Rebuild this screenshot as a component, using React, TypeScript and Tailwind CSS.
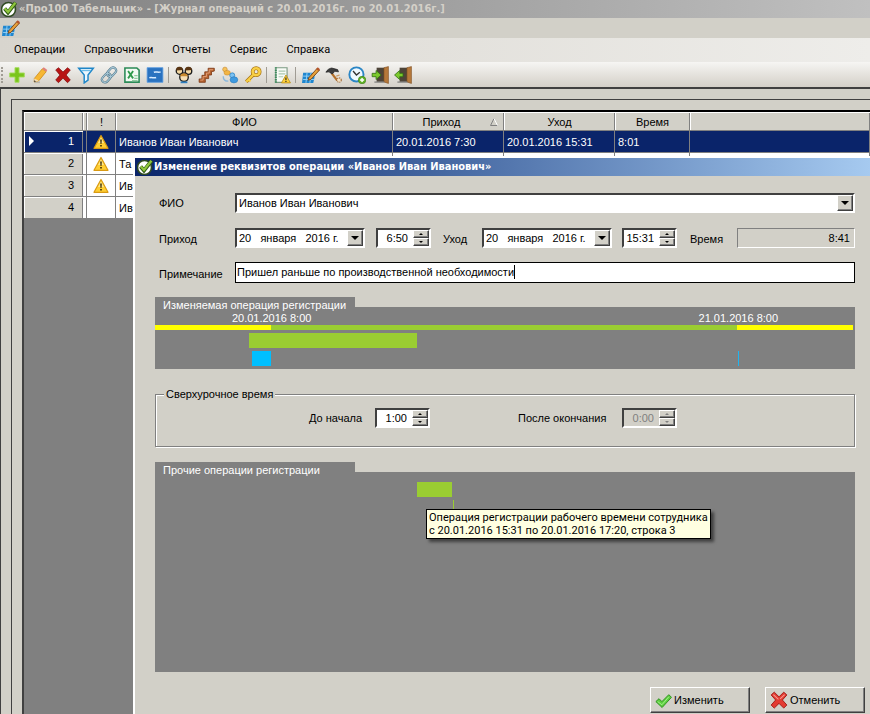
import { useState } from "react";
import type { ReactNode } from "react";

/* ---------- small pixel icons ---------- */

function Svg({ children, size = 18 }: { children: ReactNode; size?: number }) {
  return (
    <svg width={size} height={size} viewBox="0 0 16 16" fill="none" aria-hidden="true" className="shrink-0">
      {children}
    </svg>
  );
}

const AppIcon = () => (
  <Svg size={16}>
    <circle cx="7.5" cy="8.5" r="7" fill="#fff" stroke="#2f4a22" strokeWidth="1.6" />
    <path d="M3.6 7.4 7 11.4 14.6 1.6" stroke="#2f5a12" strokeWidth="3.8" />
    <path d="M3.8 7.6 7 11 14.4 1.8" stroke="#8fc63d" strokeWidth="2.2" />
  </Svg>
);

const TablePencil = () => (
  <Svg>
    <path d="M1 6h11l-2 9H0z" fill="#1f86cf" />
    <path d="M1 9h11M1 12h10M4.5 6 3.500 15M8 6 7 15" stroke="#9ad4f5" strokeWidth=".8" />
    <path d="M6 10.500 13.500 2l2 1.700L8 11.800l-2.600.8z" fill="#e7a13b" stroke="#7b4415" strokeWidth=".8" />
    <path d="M12.600 2.600 14 1l2 1.800-1.400 1.600z" fill="#b5542b" />
  </Svg>
);

const Plus = () => (
  <Svg>
    <path d="M6.200 1.500h3.600v4.700h4.700v3.600H9.800v4.700H6.200V9.800H1.500V6.200h4.700z" fill="#7ac51c" stroke="#a5dd5a" strokeWidth=".8" />
  </Svg>
);

const Pencil = () => (
  <Svg>
    <path d="M3 14.500h5" stroke="#b9b5ae" strokeWidth="1.500" />
    <path d="M3 11 10 2.500 13.500 5 7 13l-4.200 1.200z" fill="#f7b733" stroke="#c98a1b" strokeWidth=".7" />
    <path d="M10 2.500 11.300 1.200 14.500 3.600 13.500 5z" fill="#e0807a" />
    <path d="M2.800 14.200 3 11l4 2z" fill="#f4dcb4" />
    <path d="M2.700 14.300 2.900 12.700 4.500 13.700z" fill="#333" />
  </Svg>
);

const Cross = () => (
  <Svg>
    <path d="M1.500 3.500 4 1.500 8 5.300 12 1.500 14.500 3.500 10.800 8 14.500 12.500 12 14.800 8 10.800 4 14.800 1.500 12.500 5.200 8z" fill="#b81414" stroke="#7d0b0b" strokeWidth=".6" />
  </Svg>
);

const Funnel = () => (
  <Svg>
    <path d="M1.500 2h13L9.800 8v4.500L6.400 15V8z" fill="#eaf6fd" stroke="#1f86c8" strokeWidth="1.300" />
    <path d="M3.500 4h9" stroke="#6bbbe8" strokeWidth="1.200" />
  </Svg>
);

const Link = () => (
  <Svg>
    <g transform="rotate(-48 8 8)">
      <rect x="0" y="5.300" width="9" height="5.400" rx="2.700" stroke="#4b7388" strokeWidth="1.900" />
      <rect x="7" y="5.300" width="9" height="5.400" rx="2.700" stroke="#4b7388" strokeWidth="1.900" />
      <rect x="0" y="5.300" width="9" height="5.400" rx="2.700" stroke="#a9c8d6" strokeWidth=".9" />
      <rect x="7" y="5.300" width="9" height="5.400" rx="2.700" stroke="#a9c8d6" strokeWidth=".9" />
    </g>
  </Svg>
);

const Sheet = () => (
  <Svg>
    <path d="M1.700 1.700h10.600l2 2v10.600H1.700z" fill="#f2faf3" stroke="#2b8a57" strokeWidth="1.400" />
    <path d="M4.500 4.500 9 11M9 4.500 4.500 11" stroke="#2f9a4c" strokeWidth="1.600" />
    <path d="M10 8.500h3M10 11h3M8 13h5" stroke="#8fca9f" />
  </Svg>
);

const DocBlue = () => (
  <Svg>
    <path d="M1 1.500h14v13H1z" fill="#2a72c0" stroke="#5a9be0" strokeWidth=".7" />
    <path d="M7 5.500c2-.8 4 .6 6-.3M3 10.500c2-.8 4 .6 6-.3" stroke="#d9ecff" strokeWidth="1.400" />
  </Svg>
);

const People = () => (
  <Svg>
    <circle cx="4" cy="4.500" r="2.900" fill="#f4d9a5" stroke="#1d1d1d" strokeWidth="1.200" />
    <circle cx="12" cy="4.500" r="2.900" fill="#f4d9a5" stroke="#1d1d1d" strokeWidth="1.200" />
    <path d="M1 4a3 3 0 0 1 6-.5ZM9 4a3 3 0 0 1 6-.5Z" fill="#5a3512" />
    <circle cx="8" cy="10" r="3.800" fill="#f7dfb3" stroke="#1d1d1d" strokeWidth="1.200" />
    <path d="M4.500 9a3.600 3.200 0 0 1 7 0Z" fill="#c98a2e" />
    <path d="M5 14.500h6" stroke="#2f7fc0" strokeWidth="1.600" />
  </Svg>
);

const Stairs = () => (
  <Svg>
    <path d="M1 14.500v-3h2.500V8.300H6V5.200h3V2h5.500v2.500l-2.500.5v3H9.500v3.200H6.500v3.300z" fill="#b5622f" stroke="#7a3512" strokeWidth=".7" />
    <path d="M2 12.500h2.500V9.400h3V6.300h2.500V3.300h3.500" stroke="#e3a27c" strokeWidth=".8" />
  </Svg>
);

const Persons = () => (
  <Svg>
    <circle cx="3.500" cy="3" r="2" fill="#f6c35c" stroke="#c98a2e" strokeWidth=".6" />
    <ellipse cx="5.500" cy="6" rx="2.800" ry="2.100" fill="#f2b544" stroke="#c98a2e" strokeWidth=".5" />
    <circle cx="10" cy="8.300" r="2.200" fill="#7cc2f2" stroke="#2b7fc0" strokeWidth=".7" />
    <ellipse cx="11.500" cy="12.300" rx="3.400" ry="2.700" fill="#3f9ae0" stroke="#2b7fc0" strokeWidth=".6" />
    <path d="M2 9c0 3 2 4.500 4.500 4.500" stroke="#8ab7dd" strokeWidth="1.200" />
  </Svg>
);

const Key = () => (
  <Svg>
    <path d="M8.300 7.700 2 14" stroke="#a87414" strokeWidth="3.200" />
    <circle cx="10.800" cy="5" r="3.100" stroke="#a87414" strokeWidth="3.400" />
    <path d="M8.300 7.700 2 14M4 12l1.700 1.700" stroke="#f8cf45" strokeWidth="1.900" />
    <circle cx="10.800" cy="5" r="3.100" stroke="#f8cf45" strokeWidth="2.200" />
  </Svg>
);

const Notebook = () => (
  <Svg>
    <path d="M2.500 1.500h10v13h-10z" fill="#f8fbf6" stroke="#7b9a83" />
    <path d="M2.500 1v14" stroke="#3c8a5c" strokeWidth="1.800" strokeDasharray="1.300 .8" />
    <path d="M5 4.500h6M5 7h6M5 9.500h4" stroke="#a9c9b0" />
    <path d="M11.500 8 15.500 15h-8z" fill="#ffd23c" stroke="#b98a10" strokeWidth=".7" />
    <path d="M11.500 10.300v2.200M11.500 13.200v1" stroke="#222" />
  </Svg>
);

const Hammer = () => (
  <Svg>
    <path d="M6 6.500 11 13" stroke="#b5702a" strokeWidth="2" />
    <path d="M.8 5.500C2 3.300 4 2 6 1.800l5.200 1.400.8 2-3.200-.5L6.500 7 4.700 6.200 3.700 5.200z" fill="#3d3d3d" stroke="#1d1d1d" strokeWidth=".6" />
    <circle cx="12.500" cy="12.500" r="2" fill="#f3e0c3" stroke="#a06a3a" strokeDasharray="1 .7" />
    <path d="m10 9 3-1" stroke="#c99a66" />
  </Svg>
);

const ClockPlus = () => (
  <Svg>
    <circle cx="7.500" cy="7.500" r="6.300" fill="#eef8ff" stroke="#2b86c5" strokeWidth="1.700" />
    <path d="M4.500 4.500 7.500 8l3-2.500" stroke="#333" strokeWidth="1.200" />
    <circle cx="12.500" cy="12.500" r="3.300" fill="#63b52b" stroke="#3b7d14" strokeWidth=".6" />
    <path d="M12.500 10.700v3.600M10.700 12.500h3.600" stroke="#fff" strokeWidth="1.300" />
  </Svg>
);

const Door = ({ out = false }: { out?: boolean }) => (
  <Svg>
    <path d="M5 1.500h7V14H5z" fill="#4d4438" />
    <path d="M11.500 1.500 15.500.5V15.500l-4-1.300z" fill="#b5783a" stroke="#7a4a1b" strokeWidth=".5" />
    <path d="M3 14.300h9" stroke="#777" />
    <path
      d={out ? "M8 6.500H5V4L.5 8 5 12V9.500h3z" : "M1 6.500h3.500V4L9 8l-4.500 4V9.500H1z"}
      fill="#7bc92c"
      stroke="#2f6d10"
      strokeWidth=".7"
    />
  </Svg>
);

const Warning = () => (
  <svg width="16" height="16" viewBox="0 0 16 16" role="img" aria-label="Внимание" className="mx-auto block">
    <path d="M8 1.500 15 14.300H1z" fill="#ffcf33" stroke="#d99a13" strokeWidth="1.200" strokeLinejoin="round" />
    <path d="M8 3.500 11 9 5 9z" fill="#ffe88a" />
    <path d="M7.200 5.500h1.600l-.3 4.500h-1zM7.200 11h1.600v1.600H7.200z" fill="#3a2a05" />
  </svg>
);

const OkMark = () => (
  <Svg size={17}>
    <path d="M.8 9 3.800 6.300 6.500 9 13 2.500 15.500 5 6.700 14.600z" fill="#5ccf3f" stroke="#2d8f1d" strokeWidth=".9" />
    <path d="M2.500 9 6.500 12 13 4.500" stroke="#a7ef8e" strokeWidth=".9" />
  </Svg>
);

const CancelMark = () => (
  <Svg size={18}>
    <path d="M1 3.500 3.800 1 8 5.200 12.200 1 15 3.500 11 8 15 12.500 12.200 15.200 8 11 3.800 15.200 1 12.500 5 8z" fill="#e33b32" stroke="#9e1712" strokeWidth=".8" />
    <path d="M3 3.300 7.500 7.500M13 3.300 9 7" stroke="#f79a90" strokeWidth=".9" />
  </Svg>
);

const Arrow = ({ up = false, small = false }: { up?: boolean; small?: boolean }) => (
  <svg width={small ? 4 : 8} height={small ? 2 : 4} viewBox="0 0 8 4" fill="currentColor" aria-hidden="true">
    <path d={up ? "M0 4 4 0l4 4z" : "M0 0h8L4 4z"} />
  </svg>
);

/* ---------- classic bevelled controls ---------- */

const sunken = "flex h-5 border-2 border-t-[#404040] border-l-[#404040] border-r-white border-b-white";
const raised =
  "border border-t-white border-l-white border-r-[#404040] border-b-[#404040] bg-[#d2d0c8] shadow-[inset_-1px_-1px_0_#808080]";

function DateField({ id, label }: { id: string; label: string }) {
  return (
    <div className={`${sunken} w-[130px] bg-white`}>
      <input id={id} aria-label={label} defaultValue="20   января   2016 г." className="min-w-0 flex-1 pl-[2px] outline-none" />
      <button aria-label="Открыть календарь" className={`${raised} flex w-4 items-center justify-center`}>
        <Arrow />
      </button>
    </div>
  );
}

function TimeField({ id, value, disabled = false }: { id: string; value: string; disabled?: boolean }) {
  const step = `${raised} flex h-2 items-center justify-center`;
  return (
    <div className={`${sunken} w-[55px] ${disabled ? "bg-[#d2d0c8] text-[#808080]" : "bg-white"}`}>
      <input
        id={id}
        aria-label="Время"
        defaultValue={value}
        disabled={disabled}
        className="min-w-0 flex-1 bg-transparent pr-[5px] text-right outline-none"
      />
      <div className="flex w-4 flex-col bg-[#d2d0c8]">
        <button aria-label="Больше" disabled={disabled} className={step}>
          <Arrow up small />
        </button>
        <button aria-label="Меньше" disabled={disabled} className={step}>
          <Arrow small />
        </button>
      </div>
    </div>
  );
}

/* ---------- timeline: 36 hours starting at 02:00 ---------- */

const START = 2;
const SPAN = 36;
const pct = (hours: number) => `${(hours / SPAN) * 100}%`;

function Bar({ from, to, className }: { from: number; to: number; className: string }) {
  return (
    <div
      className={`h-[15px] min-w-px shrink-0 ${className}`}
      style={{ marginLeft: pct(from - START), width: pct(to - from) }}
    />
  );
}

function PanelTab({ children }: { children: ReactNode }) {
  return (
    <h2 className="relative z-10 h-[10px] w-[200px] bg-[#808080] px-2 leading-4 whitespace-nowrap text-white">
      {children}
    </h2>
  );
}

/* ---------- data ---------- */

const menu = ["Операции", "Справочники", "Отчеты", "Сервис", "Справка"];

const tools: ([string, ReactNode] | null)[] = [
  ["Добавить", <Plus />],
  ["Изменить", <Pencil />],
  ["Удалить", <Cross />],
  ["Фильтр", <Funnel />],
  ["Связать", <Link />],
  ["Таблица", <Sheet />],
  ["Документ", <DocBlue />],
  null,
  ["Сотрудники", <People />],
  ["Должности", <Stairs />],
  ["Подразделения", <Persons />],
  ["Доступ", <Key />],
  null,
  ["Отчет", <Notebook />],
  null,
  ["Журнал", <TablePencil />],
  ["Настройка", <Hammer />],
  ["Добавить время", <ClockPlus />],
  ["Вход", <Door />],
  ["Выход", <Door out />],
];

const rows = [
  { n: 1, warn: true, name: "Иванов Иван Иванович", from: "20.01.2016 7:30", to: "20.01.2016 15:31", time: "8:01" },
  { n: 2, warn: true, name: "Та", from: "", to: "", time: "" },
  { n: 3, warn: true, name: "Ив", from: "", to: "", time: "" },
  { n: 4, warn: false, name: "Ив", from: "", to: "", time: "" },
];

const headCell =
  "h-[18px] border-b border-[#808080] bg-[#d2d0c8] p-0 text-center font-normal shadow-[inset_-1px_0_0_#808080,inset_1px_0_0_#fff]";

function Journal() {
  return (
    <div className="flex-1 border-t-2 border-l-2 border-t-black border-l-[#404040] bg-[#808080]">
      <table className="w-full table-fixed border-separate border-spacing-0 border-t border-white">
        <colgroup>
          <col className="w-[59px]" />
          <col className="w-[4px]" />
          <col className="w-[29px]" />
          <col className="w-[277px]" />
          <col className="w-[111px]" />
          <col className="w-[111px]" />
          <col className="w-[75px]" />
          <col />
        </colgroup>
        <thead>
          <tr>
            <th className={headCell} />
            <th className={headCell} />
            <th className={headCell}>!</th>
            <th className={`${headCell} pr-5`}>ФИО</th>
            <th className={headCell}>
              <span className="flex items-center pr-[6px]">
                <span className="flex-1">Приход</span>
                <svg width="8" height="8" viewBox="0 0 8 8" fill="none" aria-hidden="true">
                  <path d="M4 .5.500 7.500h7" stroke="#808080" />
                  <path d="M4 .5 7.500 7.500" stroke="#fff" />
                </svg>
              </span>
            </th>
            <th className={headCell}>Уход</th>
            <th className={headCell}>Время</th>
            <th className={headCell} />
          </tr>
        </thead>
        <tbody>
          {rows.map((r) => {
            const sel = r.n === 1;
            const cell = `h-[22px] truncate border-b border-r border-[#808080] px-[3px] py-0 ${
              sel ? "bg-[#0a246a] text-white" : "bg-white"
            }`;
            return (
              <tr key={r.n}>
                <th
                  className={`h-[22px] border-b border-b-[#808080] p-0 font-normal shadow-[inset_1px_1px_0_#fff,inset_-1px_0_0_#808080] ${
                    sel ? "bg-[#0a246a] text-white" : "bg-[#d2d0c8]"
                  }`}
                >
                  <span className="flex items-center justify-between pr-[9px] pb-[2px] pl-[5px]">
                    {sel ? (
                      <svg width="5" height="10" viewBox="0 0 5 10" fill="#fff" aria-hidden="true">
                        <path d="M0 0 5 5 0 10z" />
                      </svg>
                    ) : (
                      <span />
                    )}
                    <span>{r.n}</span>
                  </span>
                </th>
                <td className={cell} />
                <td className={cell}>{r.warn && <Warning />}</td>
                <td className={cell}>{r.name}</td>
                <td className={cell}>{r.from}</td>
                <td className={cell}>{r.to}</td>
                <td className={cell}>{r.time}</td>
                <td className={cell} />
              </tr>
            );
          })}
        </tbody>
      </table>
    </div>
  );
}

function Dialog() {
  const [note, setNote] = useState("Пришел раньше по производственной необходимости");
  return (
    <section
      role="dialog"
      aria-labelledby="dialog-title"
      className="absolute top-[156px] right-0 -bottom-2 left-[133px] flex flex-col border-t-2 border-l-2 border-white bg-[#d2d0c8]"
    >
      <header className="flex h-[18px] items-center gap-px bg-linear-to-r from-[#0a246a] to-[#a6caf0] pl-[2px]">
        <AppIcon />
        <h1 id="dialog-title" className="font-['DejaVu_Sans_Condensed','DejaVu_Sans',sans-serif] text-[11px] font-bold whitespace-nowrap text-white">
          Изменение реквизитов операции «Иванов Иван Иванович»
        </h1>
      </header>

      <form className="flex flex-col pt-[17px] pr-[15px] pl-5" onSubmit={(e) => e.preventDefault()}>
        <div className="flex items-center pl-1">
          <label htmlFor="fio" className="w-[76px]">ФИО</label>
          <div className="relative flex-1">
            <select id="fio" className={`${sunken} w-full appearance-none bg-white pl-[2px] outline-none`}>
              <option>Иванов Иван Иванович</option>
            </select>
            <span className={`${raised} pointer-events-none absolute top-[2px] right-[2px] flex h-4 w-4 items-center justify-center`}>
              <Arrow />
            </span>
          </div>
        </div>

        <div className="mt-[15px] flex items-center pl-1">
          <label htmlFor="in-date" className="w-[76px] pt-[2px]">Приход</label>
          <DateField id="in-date" label="Приход" />
          <div className="w-[11px]" />
          <TimeField id="in-time" value="6:50" />
          <label htmlFor="out-date" className="w-[51px] pt-[2px] pl-[12px]">Уход</label>
          <DateField id="out-date" label="Уход" />
          <div className="w-[10px]" />
          <TimeField id="out-time" value="15:31" />
          <label htmlFor="total" className="w-[60px] pt-[2px] pl-[13px]">Время</label>
          <output
            id="total"
            className="h-5 min-w-0 flex-1 border border-t-[#808080] border-l-[#808080] border-r-white border-b-white pr-1 text-right leading-[18px]"
          >
            8:41
          </output>
        </div>

        <div className="mt-[14px] flex items-center pl-1">
          <label htmlFor="note" className="w-[76px] pt-[2px]">Примечание</label>
          <div className="flex h-[21px] min-w-0 flex-1 items-center border border-black bg-white pb-[2px] pl-px">
            <input
              id="note"
              value={note}
              onChange={(e) => setNote(e.target.value)}
              className="field-sizing-content outline-none"
            />
            <span className="h-[14px] w-px bg-black" />
          </div>
        </div>

        <div className="mt-[14px]">
          <PanelTab>Изменяемая операция регистрации</PanelTab>
          <div className="h-[62px] bg-[#808080] pt-[5px] text-white">
            <div className="flex h-[13px] items-center leading-none">
              {["20.01.2016 8:00", "21.01.2016 8:00"].map((t, i) => (
                <div key={t} className="flex w-0 justify-center whitespace-nowrap" style={{ marginLeft: pct(i === 0 ? 6 : 24) }}>
                  <span>{t}</span>
                </div>
              ))}
            </div>
            <div className="mr-[2px] flex h-[5px] bg-[#ffff00]">
              <div className="bg-[#9acd32]" style={{ marginLeft: pct(6), width: pct(24) }} />
            </div>
            <div className="mr-[2px] flex flex-col gap-[3px] pt-[3px]">
              <Bar from={6.83} to={15.52} className="bg-[#9acd32]" />
              <div className="flex">
                <Bar from={7} to={8} className="bg-[#00bfff]" />
                <Bar from={26.05} to={26.1} className="bg-[#1fb4f0]" />
              </div>
            </div>
          </div>
        </div>

        <fieldset className="mt-[17px] h-[61px] border border-[#808080] px-2 shadow-[1px_1px_0_#fff,inset_1px_1px_0_#fff]">
          <legend className="bg-[#d2d0c8] px-[2px] leading-4">Сверхурочное время</legend>
          <div className="flex items-center pt-[6px] pl-[145px]">
            <label htmlFor="before" className="w-[66px]">До начала</label>
            <TimeField id="before" value="1:00" />
            <label htmlFor="after" className="w-[192px] pl-[88px] whitespace-nowrap">После окончания</label>
            <TimeField id="after" value="0:00" disabled />
          </div>
        </fieldset>

        <div className="mt-[15px]">
          <PanelTab>Прочие операции регистрации</PanelTab>
          <div className="relative h-[200px] bg-[#808080] pt-[10px]">
            <div className="mr-[2px] flex flex-col gap-[3px]">
              <Bar from={15.52} to={17.33} className="bg-[#9acd32]" />
              <Bar from={17.35} to={17.4} className="bg-[#9acd32]" />
            </div>
            <div
              role="tooltip"
              className="absolute top-[37px] left-[271px] border border-black bg-[#ffffe1] px-[2px] py-px font-[Roboto,'DejaVu_Sans',sans-serif] text-[11px] leading-[13px] whitespace-nowrap shadow-[3px_3px_3px_rgba(0,0,0,0.5)]"
            >
              Операция регистрации рабочего времени сотрудника
              <br />с 20.01.2016 15:31 по 20.01.2016 17:20, строка 3
            </div>
          </div>
        </div>
      </form>

      <footer className="mt-[15px] flex justify-end gap-[15px] pr-[5px]">
        <button className={`${raised} flex h-[26px] w-[100px] items-center gap-[2px] pl-1`}>
          <OkMark />
          Изменить
        </button>
        <button className={`${raised} flex h-[26px] w-[100px] items-center gap-[2px] pl-1`}>
          <CancelMark />
          Отменить
        </button>
      </footer>
    </section>
  );
}

export default function App() {
  return (
    <div className="relative flex h-screen flex-col overflow-hidden bg-[#d2d0c8] font-['Liberation_Sans',Arial,sans-serif] text-[11px] leading-4 text-black">
      <header className="flex h-[18px] shrink-0 items-center gap-[2px] bg-linear-to-r from-[#808080] to-[#c0c0c0] pl-px">
        <AppIcon />
        <span className="font-['DejaVu_Sans_Condensed','DejaVu_Sans',sans-serif] text-[11px] font-bold whitespace-nowrap text-[#d4d0c8]">
          «Про100 Табельщик» - [Журнал операций с 20.01.2016г. по 20.01.2016г.]
        </span>
      </header>

      <div className="flex h-5 shrink-0 items-center pl-[2px]">
        <TablePencil />
      </div>

      <nav className="flex h-6 shrink-0 items-center gap-[19px] bg-linear-to-r from-[#d8d5ce] to-[#eeedea] pl-[14px] font-[Roboto,'DejaVu_Sans',sans-serif] text-[11px]">
        {menu.map((m) => (
          <button key={m}>{m}</button>
        ))}
      </nav>

      <div role="toolbar" className="flex h-[25px] shrink-0 items-center bg-linear-to-b from-[#f6f5f3] to-[#d4d0c8]">
        <span className="mr-[2px] ml-px h-4 border-l-2 border-dotted border-[#a09c94]" />
        {tools.map((t, i) =>
          t ? (
            <button key={i} title={t[0]} aria-label={t[0]} className="flex w-[23px] justify-center">
              {t[1]}
            </button>
          ) : (
            <span key={i} className="mr-[3px] ml-[2px] h-4 w-px bg-[#a09c94]" />
          ),
        )}
      </div>

      <main className="flex flex-1 flex-col border-t-2 border-l border-[#404040] pt-[10px] pl-[10px]">
        <div className="flex flex-1 flex-col border-t border-l border-[#404040] pt-[10px] pl-[10px]">
          <Journal />
        </div>
      </main>

      <Dialog />
    </div>
  );
}
